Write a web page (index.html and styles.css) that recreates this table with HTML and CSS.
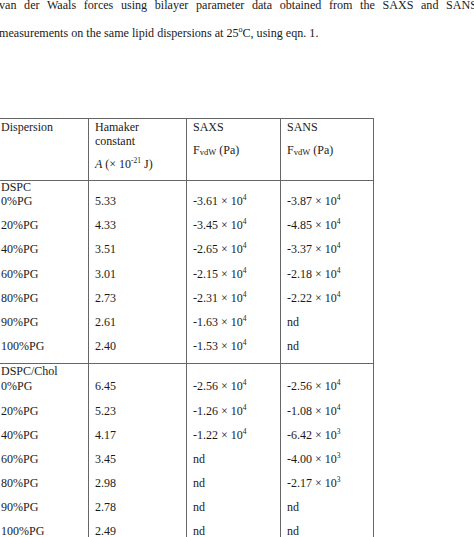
FILE: index.html
```html
<!DOCTYPE html>
<html>
<head>
<meta charset="utf-8">
<link rel="stylesheet" href="styles.css">
</head>
<body>
<div class="page">
  <p class="caption">van der Waals forces using bilayer parameter data obtained from the SAXS and SANS measurements on the same lipid dispersions at 25<sup class="deg">o</sup>C, using eqn. 1.</p>
  <table class="data">
    <colgroup>
      <col class="c1"><col class="c2"><col class="c3"><col class="c4">
    </colgroup>
    <thead>
      <tr class="head">
        <td><p>Dispersion</p></td>
        <td><p>Hamaker constant</p><p><i>A</i> (× 10<sup>-21</sup> J)</p></td>
        <td><p>SAXS</p><p>F<sub>vdW</sub> (Pa)</p></td>
        <td><p>SANS</p><p>F<sub>vdW</sub> (Pa)</p></td>
      </tr>
    </thead>
    <tbody class="sec">
      <tr class="label"><td>DSPC</td><td></td><td></td><td></td></tr>
      <tr><td>0%PG</td><td>5.33</td><td>-3.61 × 10<sup>4</sup></td><td>-3.87 × 10<sup>4</sup></td></tr>
      <tr><td>20%PG</td><td>4.33</td><td>-3.45 × 10<sup>4</sup></td><td>-4.85 × 10<sup>4</sup></td></tr>
      <tr><td>40%PG</td><td>3.51</td><td>-2.65 × 10<sup>4</sup></td><td>-3.37 × 10<sup>4</sup></td></tr>
      <tr><td>60%PG</td><td>3.01</td><td>-2.15 × 10<sup>4</sup></td><td>-2.18 × 10<sup>4</sup></td></tr>
      <tr><td>80%PG</td><td>2.73</td><td>-2.31 × 10<sup>4</sup></td><td>-2.22 × 10<sup>4</sup></td></tr>
      <tr><td>90%PG</td><td>2.61</td><td>-1.63 × 10<sup>4</sup></td><td>nd</td></tr>
      <tr><td>100%PG</td><td>2.40</td><td>-1.53 × 10<sup>4</sup></td><td>nd</td></tr>
    </tbody>
    <tbody class="sec second">
      <tr class="label"><td>DSPC/Chol</td><td></td><td></td><td></td></tr>
      <tr><td>0%PG</td><td>6.45</td><td>-2.56 × 10<sup>4</sup></td><td>-2.56 × 10<sup>4</sup></td></tr>
      <tr><td>20%PG</td><td>5.23</td><td>-1.26 × 10<sup>4</sup></td><td>-1.08 × 10<sup>4</sup></td></tr>
      <tr><td>40%PG</td><td>4.17</td><td>-1.22 × 10<sup>4</sup></td><td>-6.42 × 10<sup>3</sup></td></tr>
      <tr><td>60%PG</td><td>3.45</td><td>nd</td><td>-4.00 × 10<sup>3</sup></td></tr>
      <tr><td>80%PG</td><td>2.98</td><td>nd</td><td>-2.17 × 10<sup>3</sup></td></tr>
      <tr><td>90%PG</td><td>2.78</td><td>nd</td><td>nd</td></tr>
      <tr><td>100%PG</td><td>2.49</td><td>nd</td><td>nd</td></tr>
    </tbody>
  </table>
</div>
</body>
</html>
```
FILE: styles.css
```css
html, body {
  margin: 0;
  padding: 0;
  background: #ffffff;
}
body {
  font-family: "Liberation Serif", "Times New Roman", serif;
  color: #1a1a1a;
  width: 474px;
  height: 537px;
  overflow: hidden;
}
.page {
  width: 474px;
  height: 537px;
  overflow: hidden;
}
.caption {
  margin: -9px 0 0 -1px;
  width: 478px;
  font-size: 12.1px;
  line-height: 28px;
  text-align: justify;
}
.caption .deg {
  font-size: 8px;
  line-height: 0;
  vertical-align: 5px;
}
.data {
  margin: 71px 0 0 -6px;
  border-collapse: collapse;
  table-layout: fixed;
  width: 380px;
  font-size: 12px;
}
.c1 { width: 94px; }
.c2 { width: 98px; }
.c3 { width: 94px; }
.c4 { width: 93px; }
.data td {
  border-left: 1px solid #666666;
  border-right: 1px solid #666666;
  padding: 0 0 0 6px;
  vertical-align: top;
  line-height: 14px;
  height: 24.2px;
  white-space: nowrap;
}
.head td {
  border-top: 1px solid #666666;
  height: 60px;
  padding-top: 1px;
  white-space: normal;
}
.head p {
  margin: 0 0 9px 0;
  line-height: 14px;
}
.head td:nth-child(2) p:first-child {
  width: 60px;
}
.sec {
  border-top: 1px solid #666666;
}
.data .label td {
  height: 13px;
  line-height: 13px;
}
.data .second .label td {
  height: 15px;
  line-height: 15px;
}
sup {
  font-size: 7.5px;
  line-height: 0;
  vertical-align: 5px;
}
sub {
  font-size: 8.5px;
  line-height: 0;
  vertical-align: -1px;
}
```
